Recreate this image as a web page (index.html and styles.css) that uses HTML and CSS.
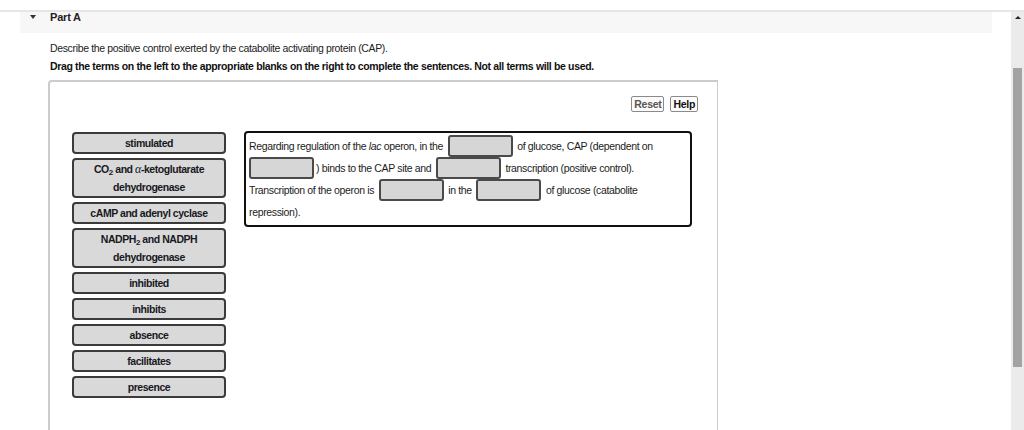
FILE: index.html
```html
<!DOCTYPE html>
<html lang="en">
<head>
<meta charset="utf-8">
<title>Part A</title>
<link rel="stylesheet" href="styles.css">
</head>
<body>
<div class="page">
  <div class="main">
    <div class="part-header">
      <span class="caret"></span>
      <span class="part-title">Part A</span>
    </div>
    <div class="content">
      <p class="desc">Describe the positive control exerted by the catabolite activating protein (CAP).</p>
      <p class="instr">Drag the terms on the left to the appropriate blanks on the right to complete the sentences. Not all terms will be used.</p>
      <div class="panel">
        <div class="toolbar">
          <button class="tool-btn reset">Reset</button>
          <button class="tool-btn help">Help</button>
        </div>
        <div class="work">
          <ul class="terms">
            <li class="term">stimulated</li>
            <li class="term">CO<sub>2</sub> and <span class="greek">α</span>-ketoglutarate<br>dehydrogenase</li>
            <li class="term">cAMP and adenyl cyclase</li>
            <li class="term">NADPH<sub>2</sub> and NADPH<br>dehydrogenase</li>
            <li class="term">inhibited</li>
            <li class="term">inhibits</li>
            <li class="term">absence</li>
            <li class="term">facilitates</li>
            <li class="term">presence</li>
          </ul>
          <div class="sentence">
            Regarding regulation of the <i>lac</i> operon, in the <span class="blank"></span> of glucose, CAP (dependent on<br>
            <span class="blank first"></span>) binds to the CAP site and <span class="blank"></span> transcription (positive control).<br>
            Transcription of the operon is <span class="blank"></span> in the <span class="blank"></span> of glucose (catabolite<br>
            repression).
          </div>
        </div>
      </div>
    </div>
  </div>
  <div class="scrollbar">
    <span class="arrow-up"></span>
    <div class="thumb"></div>
  </div>
</div>
</body>
</html>
```

FILE: styles.css
```css
html, body {
  margin: 0;
  padding: 0;
  background: #ffffff;
}

body {
  font-family: "Liberation Sans", Arial, sans-serif;
  font-size: 10.5px;
  letter-spacing: -0.35px;
  color: #222222;
  overflow: hidden;
}

.page {
  margin-top: 10px;
  border-top: 2px solid #e6e6e6;
  height: 418px;
  display: flex;
  overflow: hidden;
}

.main {
  flex: 1;
  min-width: 0;
}

.part-header {
  margin: 0 19px 0 20px;
  height: 21px;
  background: #f7f7f7;
  display: flex;
  align-items: flex-start;
}

.caret {
  width: 0;
  height: 0;
  border-left: 3.5px solid transparent;
  border-right: 3.5px solid transparent;
  border-top: 4px solid #333333;
  margin: 3px 0 0 10px;
}

.part-title {
  font-weight: bold;
  font-size: 11px;
  letter-spacing: -0.2px;
  color: #222222;
  margin-left: 14px;
  line-height: 11px;
}

.content {
  padding-left: 50px;
}

.desc {
  margin: 9px 0 0 0;
  line-height: 13px;
  color: #1c1c1c;
}

.instr {
  margin: 5px 0 0 0;
  line-height: 13px;
  font-weight: bold;
  color: #111111;
}

.panel {
  margin: 7px 0 0 -2px;
  width: 667px;
  height: 400px;
  border: 2px solid #cccccc;
  border-right-width: 1px;
  border-radius: 4px 0 0 0;
}

.toolbar {
  display: flex;
  justify-content: flex-end;
  gap: 6px;
  padding: 14px 19px 0 0;
}

.tool-btn {
  font-family: inherit;
  font-size: 10.5px;
  letter-spacing: -0.3px;
  font-weight: bold;
  height: 16px;
  padding: 0 2px;
  line-height: 14px;
  background: #fbfbfb;
  border: 1px solid #8a8a8a;
  border-radius: 2px;
}

.reset { color: #555555; }
.help { color: #111111; }

.work {
  display: flex;
  align-items: flex-start;
  gap: 18px;
  padding: 19px 0 0 22px;
}

.terms {
  list-style: none;
  margin: 1px 0 0 0;
  padding: 0;
  width: 154px;
  display: flex;
  flex-direction: column;
  gap: 4px;
}

.term {
  box-sizing: border-box;
  border: 2px solid #3b3b3b;
  border-radius: 4px;
  background: #d9d9d9;
  text-align: center;
  font-weight: bold;
  letter-spacing: -0.45px;
  line-height: 18px;
  color: #18181e;
}

.term sub {
  font-size: 8px;
  line-height: 0;
  vertical-align: -2px;
}

.greek {
  font-family: "Liberation Serif", serif;
  font-style: italic;
  font-weight: normal;
  font-size: 12px;
}

.sentence {
  box-sizing: border-box;
  width: 448px;
  border: 2px solid #111111;
  border-radius: 4px;
  padding: 2px 3px;
  line-height: 22px;
  color: #1c1c1c;
}

.blank {
  display: inline-block;
  box-sizing: border-box;
  width: 65px;
  height: 22px;
  vertical-align: top;
  margin: 0 2px;
  background: #d6d6d6;
  border: 2px solid #4a4a4a;
  border-radius: 3px;
}

.blank.first {
  margin-left: 0;
}

.scrollbar {
  width: 13px;
  flex: none;
  background: #ebebeb;
  position: relative;
}

.arrow-up {
  position: absolute;
  top: 4px;
  left: 4px;
  width: 0;
  height: 0;
  border-left: 3px solid transparent;
  border-right: 3px solid transparent;
  border-bottom: 3px solid #222222;
}

.thumb {
  margin: 56px 0 0 2px;
  width: 9px;
  height: 299px;
  background: #a3a3a3;
}
```
